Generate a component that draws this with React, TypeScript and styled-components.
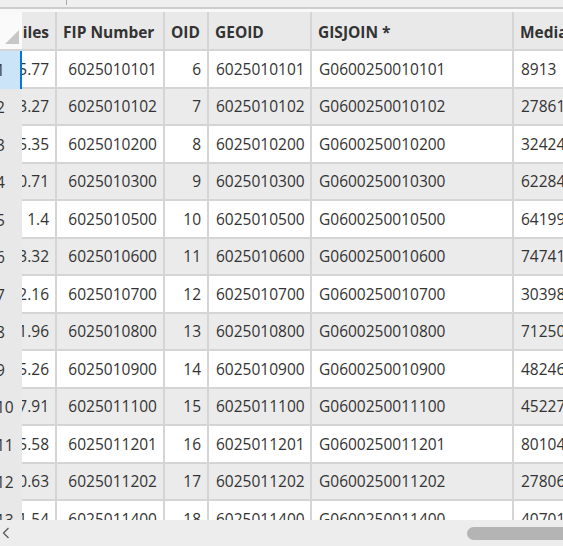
import React from "react";
import styled, { createGlobalStyle } from "styled-components";

const Global = createGlobalStyle`
  html, body { margin: 0; padding: 0; background: #ffffff; }
  body { font-family: "Open Sans", "Noto Sans", "Liberation Sans", sans-serif; }
`;

const COLS = "22px 35px 108px 44px 103px 202px 170px";
const LINE = "#d5d5d5";

const Frame = styled.div`
  width: 563px;
  height: 546px;
  overflow: hidden;
  display: flex;
  flex-direction: column;
  background: #fafafa;
`;

const TopStrip = styled.div`
  height: 7px;
  flex: none;
  background: #efefef;
  border-bottom: 2px solid #cdcdcd;
  display: flex;
  align-items: flex-start;
  padding-left: 66px;
`;

const Grip = styled.div`
  width: 1px;
  height: 5px;
  background: #a8a8a8;
`;

const Spacer = styled.div`
  height: 3px;
  flex: none;
  background: #f8f8f8;
`;

const Viewport = styled.div`
  flex: 1;
  min-height: 0;
  overflow: hidden;
  background: #ffffff;
`;

const Table = styled.div`
  display: flex;
  flex-direction: column;
  width: max-content;
  font-size: 15.5px;
  color: #333333;
`;

const HeaderRow = styled.div`
  display: grid;
  grid-template-columns: ${COLS};
  height: 39px;
  box-sizing: border-box;
  background: #e9e9e9;
  border-bottom: 2px solid ${LINE};
  font-weight: 700;
`;

const Row = styled.div<{ $alt: boolean }>`
  display: grid;
  grid-template-columns: ${COLS};
  height: 37.5px;
  box-sizing: border-box;
  background: ${(p) => (p.$alt ? "#ebebeb" : "#ffffff")};
  border-bottom: 2px solid ${LINE};
`;

const Cell = styled.div<{ $align?: "left" | "right" }>`
  display: flex;
  align-items: center;
  justify-content: ${(p) => (p.$align === "right" ? "flex-end" : "flex-start")};
  padding: 0 6px 0 7px;
  border-right: 2px solid ${LINE};
  overflow: hidden;
  white-space: nowrap;
  min-width: 0;
  box-sizing: border-box;
`;

const HeadCell = styled(Cell)`
  padding: 3px 6px 0 6px;
`;

const Corner = styled.div`
  position: relative;
  background: #fafafa;
  overflow: hidden;
`;

const CornerMark = styled.div`
  position: absolute;
  right: 3px;
  bottom: 5px;
  width: 0;
  height: 0;
  border-style: solid;
  border-width: 0 0 14px 14px;
  border-color: transparent transparent #c7c7c7 transparent;
`;

const RowHead = styled.div<{ $selected: boolean }>`
  display: flex;
  align-items: center;
  overflow: hidden;
  white-space: nowrap;
  background: ${(p) => (p.$selected ? "#cce4f7" : "#e8e8e8")};
  border-right: 2px solid ${(p) => (p.$selected ? "#0078d4" : "#e8e8e8")};
  box-sizing: border-box;
  margin-bottom: -2px;
`;

const RowNum = styled.span`
  margin-left: -4px;
  font-weight: 400;
`;

const HScroll = styled.div`
  height: 26px;
  flex: none;
  background: #ededed;
  display: flex;
  align-items: center;
  padding: 0 0 0 2px;
`;

const Chevron = styled.svg`
  width: 8px;
  height: 12px;
  flex: none;
`;

const Track = styled.div`
  flex: 1;
  display: flex;
  justify-content: flex-end;
  padding-top: 1px;
`;

const Thumb = styled.div`
  width: 96px;
  height: 13px;
  border-radius: 7px 0 0 7px;
  background: #b4b4b4;
`;

type Rec = { miles: string; fip: string; oid: number; gis: string; median: string };

const rows: Rec[] = [
  { miles: "5.77", fip: "6025010101", oid: 6, gis: "G0600250010101", median: "8913" },
  { miles: "3.27", fip: "6025010102", oid: 7, gis: "G0600250010102", median: "27861" },
  { miles: "5.35", fip: "6025010200", oid: 8, gis: "G0600250010200", median: "32424" },
  { miles: "0.71", fip: "6025010300", oid: 9, gis: "G0600250010300", median: "62284" },
  { miles: "1.4", fip: "6025010500", oid: 10, gis: "G0600250010500", median: "64199" },
  { miles: "3.32", fip: "6025010600", oid: 11, gis: "G0600250010600", median: "74741" },
  { miles: "2.16", fip: "6025010700", oid: 12, gis: "G0600250010700", median: "30398" },
  { miles: "1.96", fip: "6025010800", oid: 13, gis: "G0600250010800", median: "71250" },
  { miles: "5.26", fip: "6025010900", oid: 14, gis: "G0600250010900", median: "48246" },
  { miles: "7.91", fip: "6025011100", oid: 15, gis: "G0600250011100", median: "45227" },
  { miles: "5.58", fip: "6025011201", oid: 16, gis: "G0600250011201", median: "80104" },
  { miles: "0.63", fip: "6025011202", oid: 17, gis: "G0600250011202", median: "27806" },
  { miles: "1.54", fip: "6025011400", oid: 18, gis: "G0600250011400", median: "40701" },
];

export default function App() {
  return (
    <>
      <Global />
      <Frame>
        <TopStrip>
          <Grip />
        </TopStrip>
        <Spacer />
        <Viewport>
          <Table>
            <HeaderRow>
              <Corner>
                <CornerMark />
              </Corner>
              <HeadCell $align="right">Miles</HeadCell>
              <HeadCell>FIP Number</HeadCell>
              <HeadCell>OID</HeadCell>
              <HeadCell>GEOID</HeadCell>
              <HeadCell>GISJOIN *</HeadCell>
              <HeadCell>Median Household Income</HeadCell>
            </HeaderRow>
            {rows.map((r, i) => (
              <Row key={r.oid} $alt={i % 2 === 1}>
                <RowHead $selected={i === 0}>
                  <RowNum>{i + 1}</RowNum>
                </RowHead>
                <Cell $align="right">{r.miles}</Cell>
                <Cell $align="right">{r.fip}</Cell>
                <Cell $align="right">{r.oid}</Cell>
                <Cell>{r.fip}</Cell>
                <Cell>{r.gis}</Cell>
                <Cell>{r.median}</Cell>
              </Row>
            ))}
          </Table>
        </Viewport>
        <HScroll>
          <Chevron viewBox="0 0 8 12">
            <path d="M6.5 1 L1.5 6 L6.5 11" fill="none" stroke="#5a5a5a" strokeWidth="1.3" />
          </Chevron>
          <Track>
            <Thumb />
          </Track>
        </HScroll>
      </Frame>
    </>
  );
}
